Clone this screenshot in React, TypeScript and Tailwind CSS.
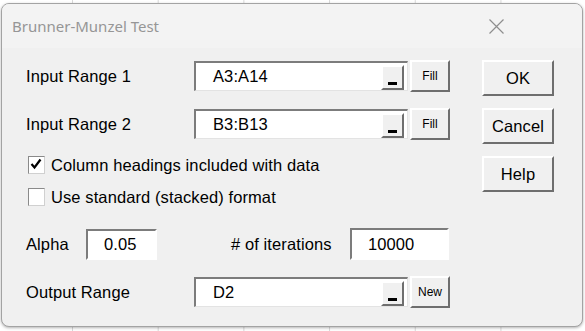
import type { ReactNode } from 'react'

const font = { fontFamily: '"Liberation Sans", Arial, sans-serif' }

function Raised({ className, children }: { className: string; children?: ReactNode }) {
  return (
    <div
      className={`flex items-center justify-center bg-[#f0f0f0] border-t-2 border-l-2 border-t-white border-l-white border-b-2 border-r-2 border-b-[#6e6e6e] border-r-[#6e6e6e] text-black ${className}`}
    >
      {children}
    </div>
  )
}

function RangeBox({ value }: { value: string }) {
  return (
    <div className="flex items-center w-[214px] h-[30px] bg-white border-t-2 border-l-2 border-t-[#7c7c7c] border-l-[#7c7c7c] border-b border-r border-b-[#e3e3e3] border-r-[#e3e3e3]">
      <span className="flex-1 pl-[17px] text-[16.5px] tracking-[0.1px] text-black leading-none">{value}</span>
      <Raised className="w-[23px] h-[25px] mr-[3px] mt-[2px] items-end pb-[3px]">
        <span className="block w-[9px] h-[3px] bg-black" />
      </Raised>
    </div>
  )
}

function TextBox({ value, className }: { value: string; className: string }) {
  return (
    <div
      className={`flex items-center bg-white border-t-2 border-l-2 border-t-[#7c7c7c] border-l-[#7c7c7c] border-b-2 border-r-2 border-b-white border-r-white text-[16.5px] tracking-[0.1px] text-black ${className}`}
    >
      {value}
    </div>
  )
}

function CheckBox({ checked, label }: { checked: boolean; label: string }) {
  return (
    <div className="flex items-center h-[18px] pl-[2px]">
      <div className="w-[17px] h-[18px] bg-white border border-t-[#8a8a8a] border-l-[#8a8a8a] border-b-[#d0d0d0] border-r-[#d0d0d0] flex items-start justify-start">
        {checked && (
          <svg width="13" height="12" viewBox="0 0 13 12" className="ml-[1px] mt-[1px]">
            <path d="M1.5 6 L4.5 9.5 L10.5 1.5" fill="none" stroke="#000" strokeWidth="2.2" />
          </svg>
        )}
      </div>
      <span className="ml-[6px] text-[16.5px] tracking-[0.1px] text-black">{label}</span>
    </div>
  )
}

function RangeRow({ label, value, button }: { label: string; value: string; button: string }) {
  return (
    <div className="flex items-center h-[32px]">
      <span className="w-[168px] text-[16.5px] tracking-[0.1px] text-black">{label}</span>
      <RangeBox value={value} />
      <Raised className="w-[40px] h-[32px] ml-[2px] text-[12px]">{button}</Raised>
    </div>
  )
}

export default function App() {
  return (
    <div
      className="w-[585px] h-[331px] bg-white bg-[linear-gradient(to_right,#d9d9d9_1px,transparent_1px)] bg-[size:85.7px_100%] bg-[position:72px_0] pt-[3px] pl-[1px]"
      style={font}
    >
      <div className="w-[582px] h-[324px] rounded-[8px] border border-[#a3a3a3] overflow-hidden bg-[#f0f0f0] shadow-[0_1px_3px_rgba(0,0,0,0.3)]">
        {/* Title bar */}
        <div className="flex items-center justify-between h-[44px] bg-[#f3f3f3] pl-[10px] pr-[78px]">
          <span className="text-[15px] text-[#969696]" style={{ fontFamily: '"Noto Sans", "Open Sans", sans-serif' }}>
            Brunner-Munzel Test
          </span>
          <svg width="15" height="15" viewBox="0 0 15 15">
            <path d="M0.5 0.5 L14.5 14.5 M14.5 0.5 L0.5 14.5" stroke="#8e8e8e" strokeWidth="1.2" />
          </svg>
        </div>

        {/* Body */}
        <div className="flex pl-[24px] pt-[12px]">
          <div className="w-[425px]">
            <RangeRow label="Input Range 1" value="A3:A14" button="Fill" />
            <div className="mt-[16px]">
              <RangeRow label="Input Range 2" value="B3:B13" button="Fill" />
            </div>
            <div className="mt-[16px]">
              <CheckBox checked label="Column headings included with data" />
            </div>
            <div className="mt-[14px]">
              <CheckBox checked={false} label="Use standard (stacked) format" />
            </div>
            <div className="flex items-center h-[32px] mt-[22px]">
              <span className="w-[60px] text-[16.5px] tracking-[0.1px] text-black">Alpha</span>
              <TextBox value="0.05" className="w-[71px] h-[31px] pl-[16px]" />
              <span className="ml-[74px] w-[119px] text-[16.5px] tracking-[0.1px] text-black"># of iterations</span>
              <TextBox value="10000" className="w-[99px] h-[32px] pl-[16px]" />
            </div>
            <div className="mt-[16px]">
              <RangeRow label="Output Range" value="D2" button="New" />
            </div>
          </div>

          <div className="ml-[31px] flex flex-col gap-[12px]">
            <Raised className="w-[72px] h-[36px] text-[16.5px] tracking-[0.1px]">OK</Raised>
            <Raised className="w-[72px] h-[36px] text-[16.5px] tracking-[0.1px]">Cancel</Raised>
            <Raised className="w-[72px] h-[36px] text-[16.5px] tracking-[0.1px]">Help</Raised>
          </div>
        </div>
      </div>
    </div>
  )
}
